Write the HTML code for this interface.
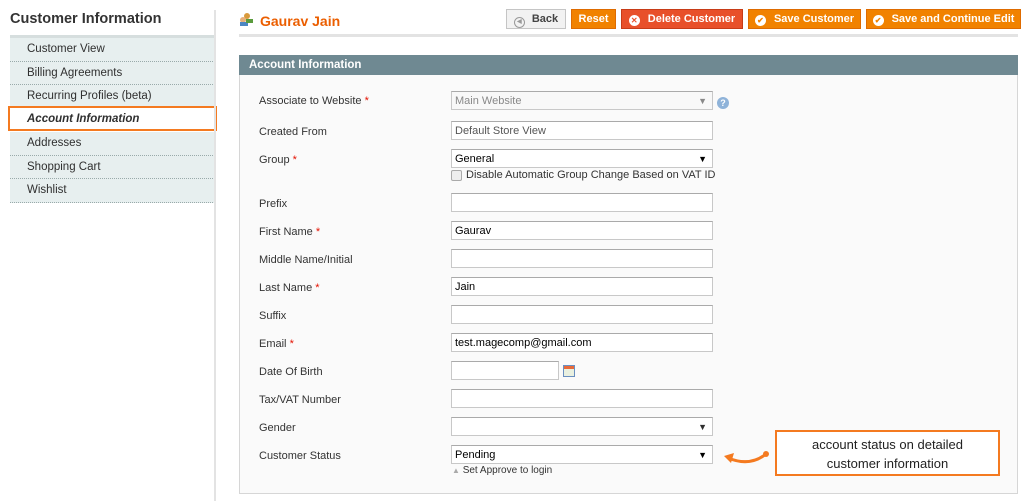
<!DOCTYPE html>
<html><head><style>
*{box-sizing:border-box;margin:0;padding:0}
body{width:1024px;height:501px;background:#fff;font-family:"Liberation Sans",Arial,sans-serif;font-size:11.5px;color:#2f2f2f;position:relative;overflow:hidden}
.a{position:absolute}
.side li{list-style:none;position:absolute;left:10px;width:205px;height:23.5px;padding-left:17px;line-height:23px;border-bottom:1px dotted #9aa;background:#e7efef;font-size:11.5px}
.lbl{position:absolute;left:259px;font-size:11px;color:#333;margin-top:2px}
.req{color:#e41101}
.inp{position:absolute;left:451px;width:262px;height:19px;background:#fff;border:1px solid #c8c8c8;border-top-color:#aaa;padding-left:3px;line-height:18px;font-size:11px}
.arr{position:absolute;right:5px;top:0;font-size:9px}
.btn{position:absolute;top:9px;height:20px;line-height:18px;color:#fff;font-weight:bold;font-size:11px;background:#f18200;border:1px solid #de6b00;padding:0 5px;white-space:nowrap;overflow:hidden;text-align:center}
.ck{display:inline-block;width:11px;height:11px;border-radius:50%;background:#fff;color:#f18200;font-size:8px;line-height:11px;text-align:center;margin-right:8px;vertical-align:-1px}
</style></head><body>
<div class="a" style="left:10px;top:11px;font-size:14.5px;font-weight:bold;color:#333">Customer Information</div>
<div class="a" style="left:10px;top:35px;width:205px;height:3px;background:#d6dede"></div>
<ul class="side">
<li style="top:38px">Customer View</li>
<li style="top:61.5px">Billing Agreements</li>
<li style="top:85px">Recurring Profiles (beta)</li>
<li style="top:108.5px;background:#fff;border:none"></li>
<li style="top:132px">Addresses</li>
<li style="top:155.5px">Shopping Cart</li>
<li style="top:179px">Wishlist</li>
</ul>
<div class="a" style="left:8px;top:106px;width:209px;height:25px;border:2px solid #f47a20;padding-left:17px;line-height:22px;font-weight:bold;font-style:italic;background:#fff">Account Information</div>
<div class="a" style="left:214px;top:10px;width:2px;height:491px;background:#e3e3e3"></div>

<div class="a" style="left:240px;top:13px;width:13px;height:13px;">
<div class="a" style="left:4px;top:0;width:6px;height:6px;border-radius:50%;background:#d99a3c"></div>
<div class="a" style="left:0;top:4px;width:6px;height:6px;border-radius:50%;background:#e7b07a"></div>
<div class="a" style="left:0;top:9px;width:8px;height:4px;background:#4c86c2"></div>
<div class="a" style="left:6px;top:6px;width:7px;height:4px;background:#5a9b3c"></div>
</div>
<div class="a" style="left:260px;top:13px;font-size:14px;font-weight:bold;color:#eb5e00">Gaurav Jain</div>

<div class="btn" style="left:506px;background:#f2f2f2;border-color:#c5c5c5;color:#444;width:60px"><span style="display:inline-block;width:11px;height:11px;border:1px solid #999;border-radius:50%;font-size:6px;line-height:9px;text-align:center;margin-right:7px;vertical-align:-1px;color:#999">◀</span>Back</div>
<div class="btn" style="left:571px;width:45px">Reset</div>
<div class="btn" style="left:621px;width:122px;background:#e8502a;border-color:#c73b17"><span class="ck" style="color:#e8502a">✕</span>Delete Customer</div>
<div class="btn" style="left:748px;width:113px"><span class="ck">✔</span>Save Customer</div>
<div class="btn" style="left:866px;width:155px"><span class="ck">✔</span>Save and Continue Edit</div>
<div class="a" style="left:239px;top:34px;width:779px;height:3px;background:#e3e3e3"></div>

<div class="a" style="left:239px;top:55px;width:779px;height:20px;background:#6f8992;color:#fff;font-weight:bold;padding-left:10px;line-height:21px">Account Information</div>
<div class="a" style="left:239px;top:75px;width:779px;height:419px;background:#fafafa;border:1px solid #d6d6d6;border-top:none"></div>

<div class="lbl" style="top:93px">Associate to Website <span class="req">*</span></div>
<div class="inp" style="top:91px;color:#888;background:#f8f8f8">Main Website<span class="arr" style="color:#888">▼</span></div>
<div class="a" style="left:717px;top:97px;width:12px;height:12px;border-radius:50%;background:#8fb3d9;color:#fff;font-size:9px;text-align:center;line-height:12px;font-weight:bold">?</div>
<div class="lbl" style="top:124px">Created From</div>
<div class="inp" style="top:121px;color:#555">Default Store View</div>
<div class="lbl" style="top:152px">Group <span class="req">*</span></div>
<div class="inp" style="top:149px;color:#000">General<span class="arr">▼</span></div>
<div class="a" style="left:451px;top:170px;width:11px;height:11px;border:1px solid #aaa;background:#eee;border-radius:2px"></div>
<div class="a" style="left:466px;top:169px;color:#333;font-size:11px">Disable Automatic Group Change Based on VAT ID</div>
<div class="lbl" style="top:196px">Prefix</div><div class="inp" style="top:193px"></div>
<div class="lbl" style="top:224px">First Name <span class="req">*</span></div><div class="inp" style="top:221px;color:#000">Gaurav</div>
<div class="lbl" style="top:252px">Middle Name/Initial</div><div class="inp" style="top:249px"></div>
<div class="lbl" style="top:280px">Last Name <span class="req">*</span></div><div class="inp" style="top:277px;color:#000">Jain</div>
<div class="lbl" style="top:308px">Suffix</div><div class="inp" style="top:305px"></div>
<div class="lbl" style="top:336px">Email <span class="req">*</span></div><div class="inp" style="top:333px;color:#000">test.magecomp@gmail.com</div>
<div class="lbl" style="top:364px">Date Of Birth</div><div class="inp" style="top:361px;width:108px"></div>
<div class="a" style="left:563px;top:365px;width:12px;height:12px;border:1px solid #6a8fc0;background:#e9f0e0"><div style="height:3px;background:#e86a3a"></div></div>
<div class="lbl" style="top:392px">Tax/VAT Number</div><div class="inp" style="top:389px"></div>
<div class="lbl" style="top:420px">Gender</div><div class="inp" style="top:417px"><span class="arr">▼</span></div>
<div class="lbl" style="top:448px">Customer Status</div><div class="inp" style="top:445px;color:#000">Pending<span class="arr">▼</span></div>
<div class="a" style="left:452px;top:465px;font-size:10px;color:#333"><span style="color:#aaa;font-size:8px">▲</span> Set Approve to login</div>

<svg class="a" style="left:720px;top:445px" width="55" height="25"><path d="M46 9 Q30 22 8 13" stroke="#f47a20" stroke-width="3" fill="none"/><circle cx="46" cy="9" r="3" fill="#f47a20"/><path d="M4 11 L14 8 L11 18 Z" fill="#f47a20"/></svg>
<div class="a" style="left:775px;top:430px;width:225px;height:46px;border:2px solid #f47a20;background:#fff;text-align:center;font-size:13px;line-height:19px;padding-top:3px;color:#222">account status on detailed<br>customer information</div>
</body></html>
